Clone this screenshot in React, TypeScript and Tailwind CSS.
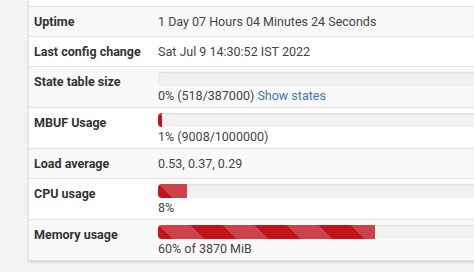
const stripe = {
  backgroundImage:
    "linear-gradient(45deg, rgba(255,255,255,.2) 25%, transparent 25%, transparent 50%, rgba(255,255,255,.2) 50%, rgba(255,255,255,.2) 75%, transparent 75%, transparent)",
  backgroundSize: "64px 64px",
};

function Bar({ pct }: { pct: number }) {
  return (
    <div className="h-[14px] w-full rounded-[4px] bg-[#f2f2f2] shadow-[inset_0_1px_2px_rgba(0,0,0,0.1)] overflow-hidden">
      <div className="h-full bg-[#c1141c]" style={{ width: `${pct}%`, ...stripe }} />
    </div>
  );
}

type Row = { label: string; value: React.ReactNode; bar?: number };

const rows: Row[] = [
  { label: "Uptime", value: "1 Day 07 Hours 04 Minutes 24 Seconds" },
  { label: "Last config change", value: "Sat Jul 9 14:30:52 IST 2022" },
  {
    label: "State table size",
    bar: 0,
    value: (
      <>
        0% (518/387000) <span className="text-[#3f77b5]">Show states</span>
      </>
    ),
  },
  { label: "MBUF Usage", bar: 1, value: "1% (9008/1000000)" },
  { label: "Load average", value: "0.53, 0.37, 0.29" },
  { label: "CPU usage", bar: 8, value: "8%" },
  { label: "Memory usage", bar: 60, value: "60% of 3870 MiB" },
];

export default function App() {
  return (
    <div className="w-[474px] h-[272px] overflow-hidden bg-[#f3f3f3] font-['Roboto',sans-serif] text-[12.5px]">
      <div className="ml-[29px] w-[496px] bg-white shadow-[0_1px_3px_rgba(0,0,0,0.18)]">
        <div className="h-[7px] border-b border-[#e2e2e2]" />
        {rows.map((r, i) => (
          <div
            key={r.label}
            className={`flex border-b border-[#e2e2e2] ${i % 2 === 0 ? "bg-[#f9f9f9]" : "bg-white"}`}
          >
            <div className="w-[124px] shrink-0 pl-[5px] pt-[5px] font-bold text-[#333] leading-[19px]">
              {r.label}
            </div>
            <div className={`flex-1 pl-[5px] pr-[5px] text-[#444] leading-[19px] ${r.bar !== undefined ? "pt-[5px] pb-[2px]" : "py-[5px]"}`}>
              {r.bar !== undefined && <Bar pct={r.bar} />}
              <div>{r.value}</div>
            </div>
          </div>
        ))}
      </div>
    </div>
  );
}
